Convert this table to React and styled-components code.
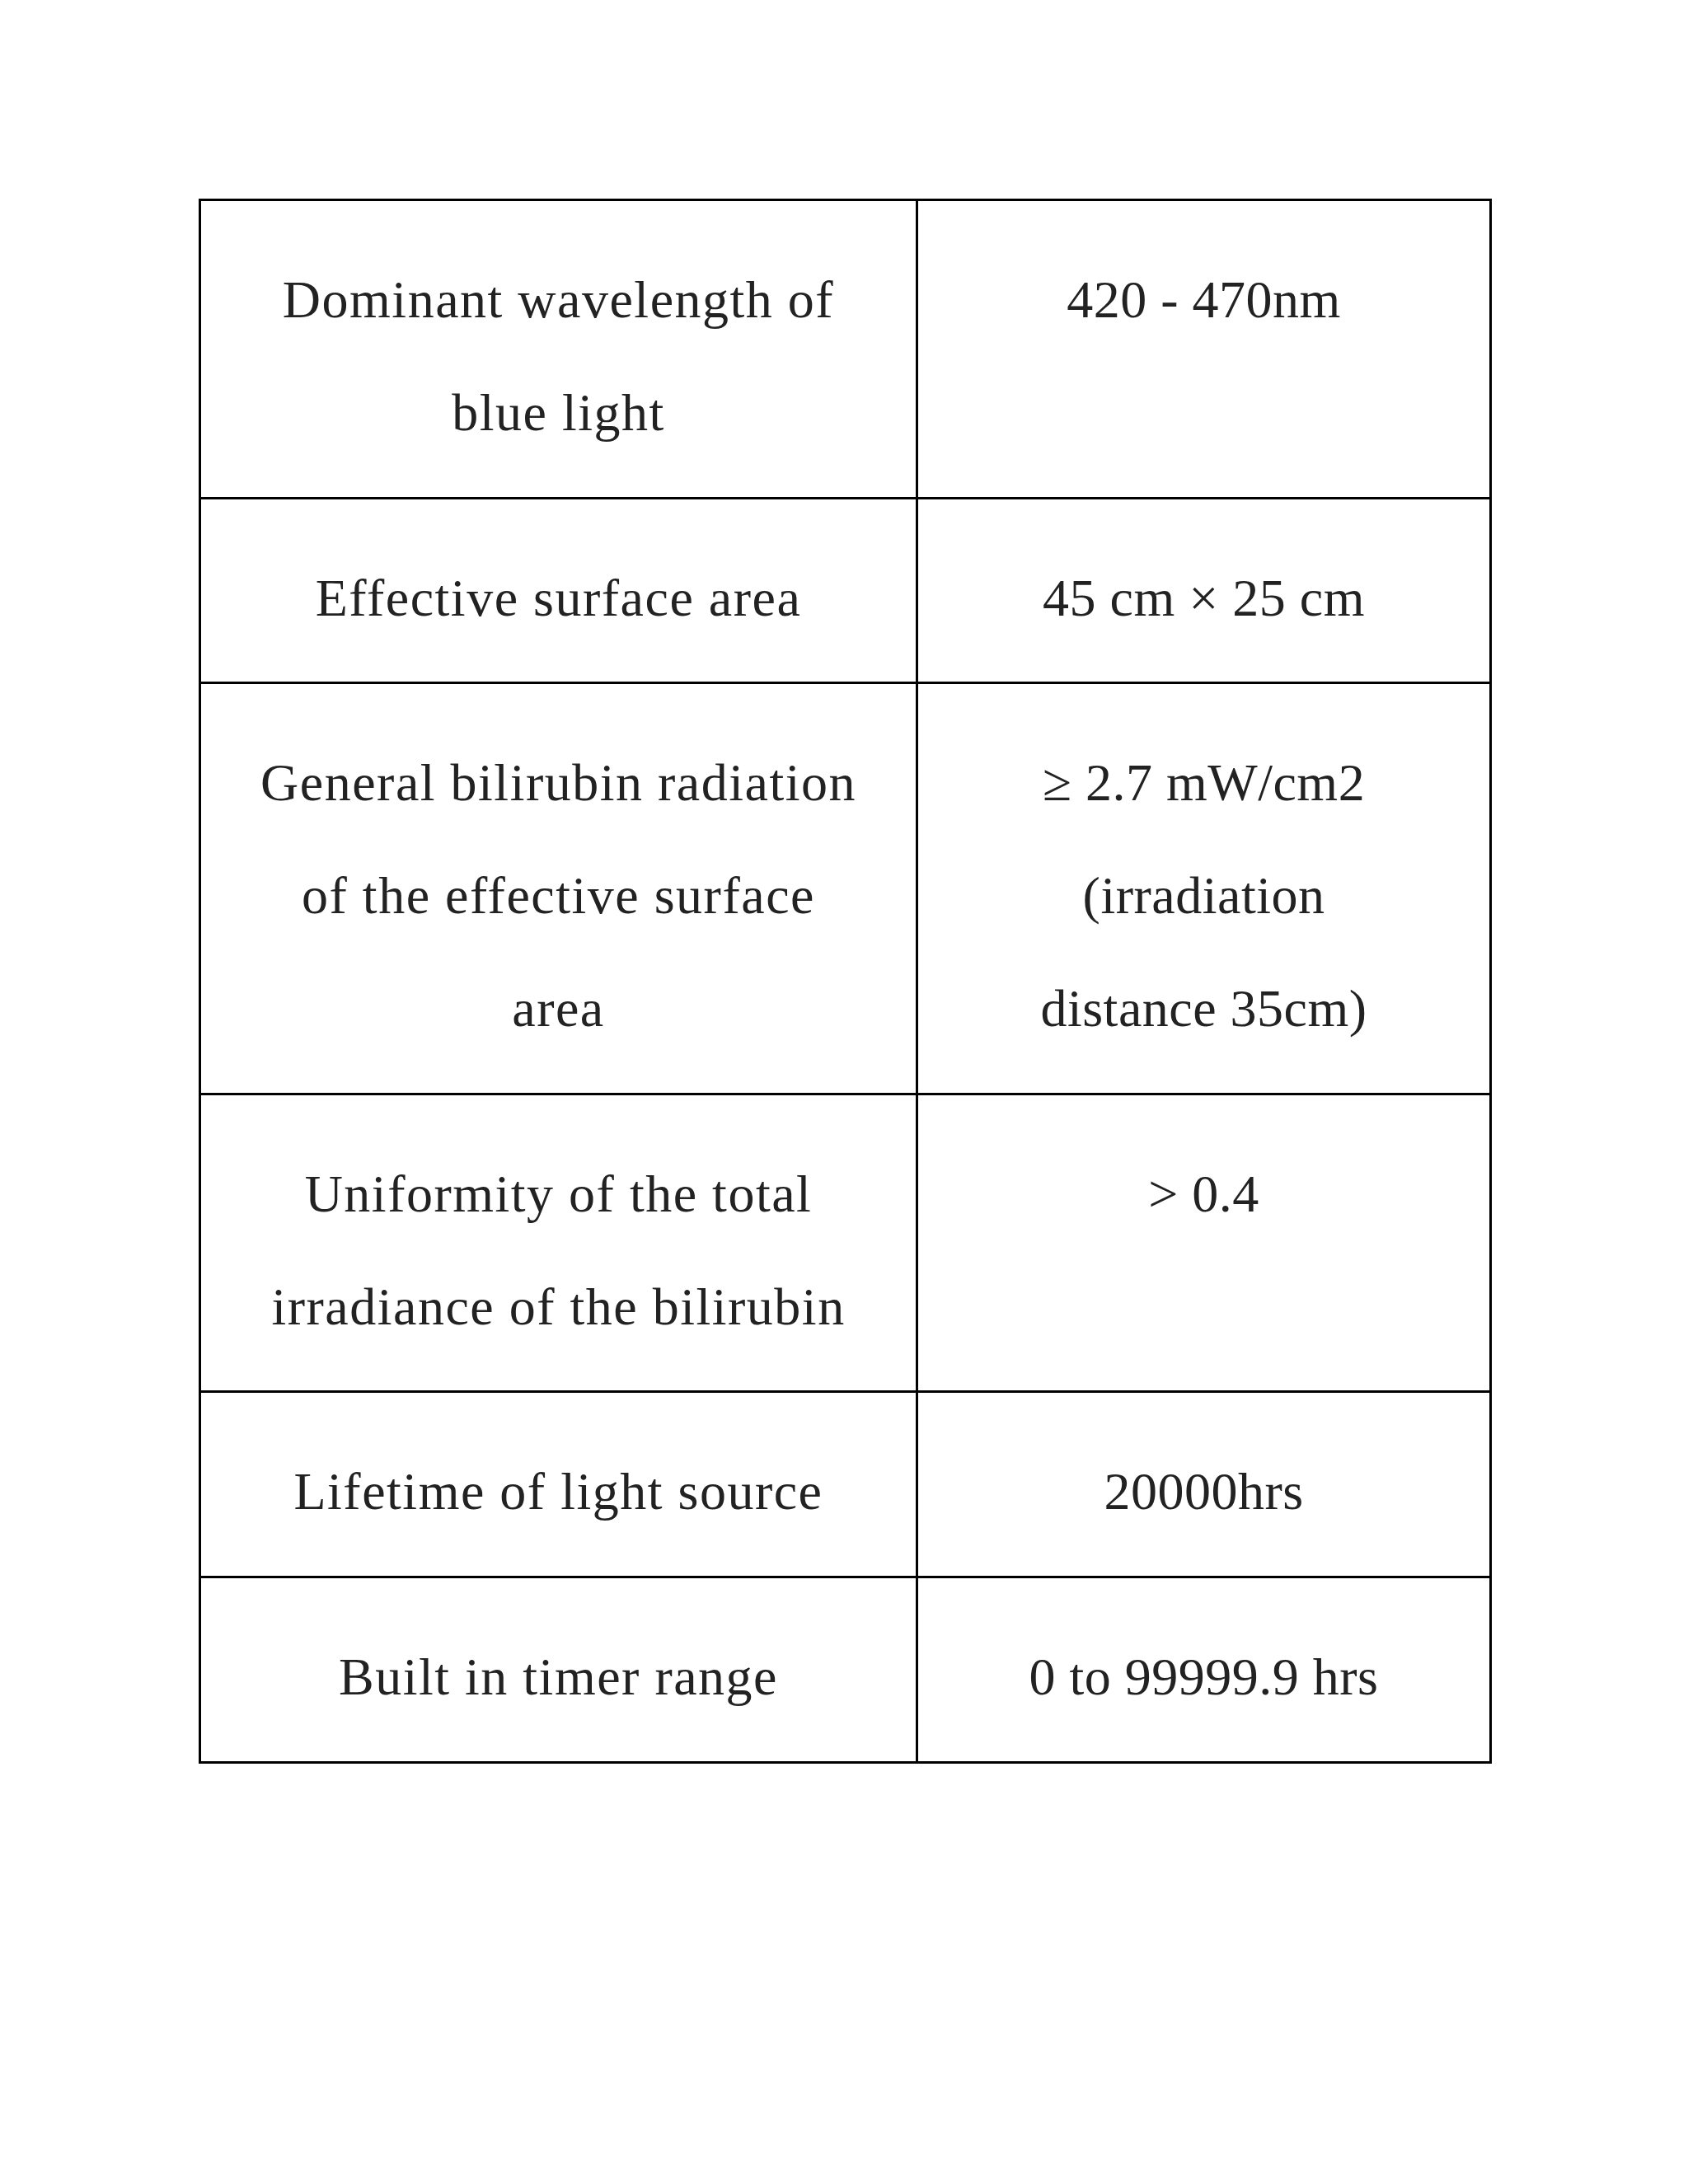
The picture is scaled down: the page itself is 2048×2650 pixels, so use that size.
import React from 'react';
import styled, { createGlobalStyle } from 'styled-components';

const GlobalStyle = createGlobalStyle`
  html, body {
    margin: 0;
    padding: 0;
    background: #ffffff;
  }
  body {
    width: 2048px;
    min-height: 2650px;
  }
`;

const Page = styled.main`
  padding: 241px 0 0 241px;
`;

const SpecTable = styled.table`
  border-collapse: separate;
  border-spacing: 0;
  width: 1569px;
  table-layout: fixed;
  border-top: 3px solid #000;
  border-left: 3px solid #000;
  font-family: "Liberation Serif", "Times New Roman", serif;
  font-size: 64px;
  line-height: 137px;
  color: #222222;
`;

const Cell = styled.td`
  width: ${(p) => p.$width}px;
  padding: 51px 0 33.6px;
  border-right: 3px solid #000;
  border-bottom: 3px solid #000;
  text-align: center;
  vertical-align: top;
  white-space: nowrap;
  letter-spacing: ${(p) => p.$tracking}px;
`;

const Line = styled.span`
  display: block;
`;

const specs = [
  { label: ['Dominant wavelength of', 'blue light'], value: ['420 - 470nm'] },
  { label: ['Effective surface area'], value: ['45 cm × 25 cm'] },
  {
    label: ['General bilirubin radiation', 'of the effective surface', 'area'],
    value: ['≥ 2.7 mW/cm2', '(irradiation', 'distance 35cm)'],
  },
  {
    label: ['Uniformity of the total', 'irradiance of the bilirubin'],
    value: ['> 0.4'],
  },
  { label: ['Lifetime of light source'], value: ['20000hrs'] },
  { label: ['Built in timer range'], value: ['0 to 99999.9 hrs'] },
];

const Lines = ({ items }) => items.map((t) => <Line key={t}>{t}</Line>);

export default function App() {
  return (
    <>
      <GlobalStyle />
      <Page>
        <SpecTable>
          <tbody>
            {specs.map((row) => (
              <tr key={row.label[0]}>
                <Cell $width={867} $tracking={1.5}>
                  <Lines items={row.label} />
                </Cell>
                <Cell $width={693} $tracking={0.5}>
                  <Lines items={row.value} />
                </Cell>
              </tr>
            ))}
          </tbody>
        </SpecTable>
      </Page>
    </>
  );
}
